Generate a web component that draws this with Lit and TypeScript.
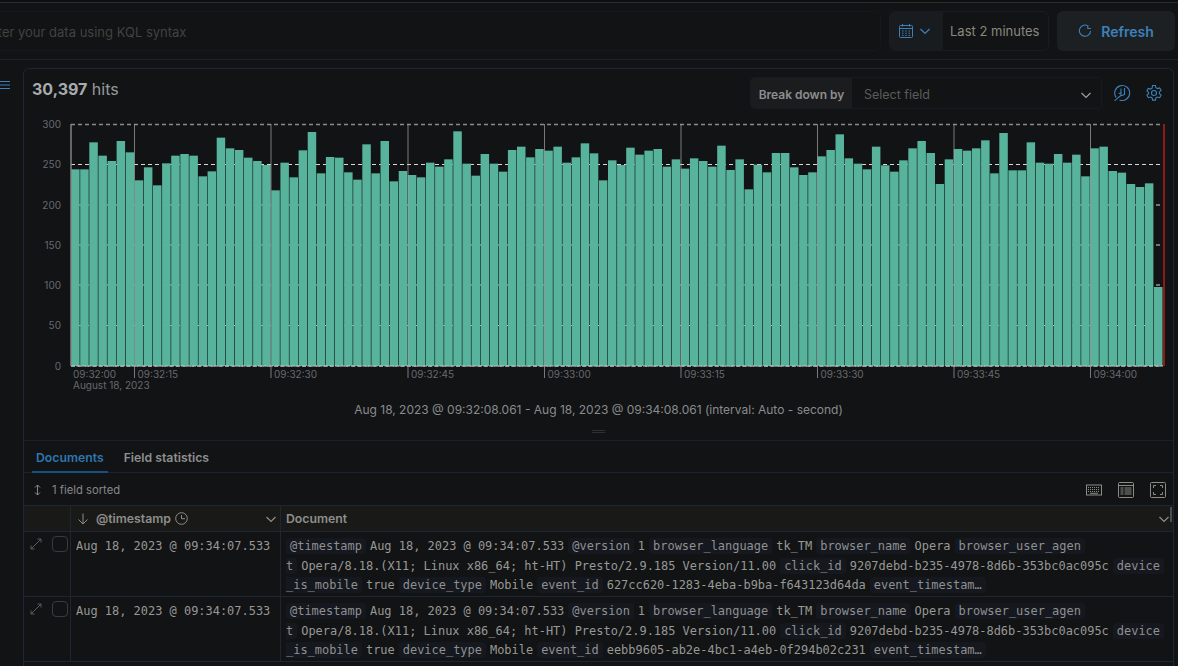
import { LitElement, html, css, svg } from "lit";
import { customElement } from "lit/decorators.js";

const TOPS = [133,133,52,92,108,48,82,166,127,181,115,92,87,92,154,139,38,70,75,98,108,120,196,113,157,76,21,145,96,98,
142,164,58,145,48,169,138,150,157,113,125,103,19,116,152,87,116,140,75,65,97,72,77,65,113,97,55,85,166,106,
120,68,89,77,72,125,103,131,100,108,125,62,135,103,193,119,142,84,84,127,150,142,94,75,28,100,116,133,65,121,
140,106,70,48,84,177,103,72,77,70,46,145,24,136,136,52,113,116,87,113,89,154,70,65,138,143,177,186,175,486];

const TICKS: [number, string][] = [[134.5,"09:32:15"],[271,"09:32:30"],[408,"09:32:45"],[544.5,"09:33:00"],[681,"09:33:15"],[817.5,"09:33:30"],[954,"09:33:45"],[1090.5,"09:34:00"]];
const GRID: [number, string][] = [[124.5,"300"],[164.5,"250"],[205,"200"],[245,"150"],[285,"100"],[325.5,"50"],[366,"0"]];

function chart() {
  return html`<svg class="chart" width="1150" height="285" viewBox="24 115 1150 285">
    ${GRID.map(([y, l], i) => svg`
      <line x1="71" x2="1163" y1=${y} y2=${y} stroke=${i === 0 ? "#8a8a8a" : "#d8d8d8"} stroke-width=${i === 0 ? 1.5 : 1} stroke-dasharray="4 3"></line>
      <text x="61" y=${y + 3.5} text-anchor="end" class="ax">${l}</text>`)}
    ${TOPS.map((z, i) => {
      const top = 125 + z / 3;
      return svg`<rect x=${70.8 + i * 9.1 + 0.3} y=${top} width="8.5" height=${366 - top} fill="#57b39b"></rect>`;
    })}
    <line x1="71" x2="1163" y1="366" y2="366" stroke="#c9c9c9" stroke-width="1.2" stroke-dasharray="4 1.5"></line>
    <line x1="71" x2="71" y1="124" y2="366" stroke="#8a8a8a" stroke-width="1.4"></line>
    ${TICKS.map(([x, l]) => svg`
      <line x1=${x} x2=${x} y1="124" y2="378" stroke="#a4a6a6" stroke-width="1" opacity="0.7"></line>
      <text x=${x + 3} y="378" class="ax">${l}</text>`)}
    <text x="73" y="378" class="ax">09:32:00</text>
    <text x="73" y="389" class="ax">August 18, 2023</text>
    <line x1="1164" x2="1164" y1="124" y2="366" stroke="#8f1a1a" stroke-width="2"></line>
  </svg>`;
}

type Item = [string, string];
function line(items: (Item | string)[]) {
  return html`<div class="ln">${items.map((it) =>
    typeof it === "string"
      ? html`<span class="dd">${it}</span>`
      : html`<span class=${it[0] === "c" ? "dt cont" : "dt"}>${it[1]}</span>`
  )}</div>`;
}

function row(id: string) {
  return html`<div class="row">
    <div class="c-ctl">
      <svg class="ic" width="12" height="12" viewBox="0 0 12 12" fill="none" stroke="#5b5d5e" stroke-width="1"><path d="M1 11L11 1M7.5 1H11v3.5M1 7.5V11h3.5"></path></svg>
      <span class="cb"></span>
    </div>
    <div class="c-ts">Aug 18, 2023 @ 09:34:07.533</div>
    <div class="c-doc">
      ${line([["d","@timestamp"],"Aug 18, 2023 @ 09:34:07.533",["d","@version"],"1",["d","browser_language"],"tk_TM",["d","browser_name"],"Opera",["d","browser_user_agen"]])}
      ${line([["c","t"],"Opera/8.18.(X11; Linux x86_64; ht-HT) Presto/2.9.185 Version/11.00",["d","click_id"],"9207debd-b235-4978-8d6b-353bc0ac095c",["d","device"]])}
      ${line([["c","_is_mobile"],"true",["d","device_type"],"Mobile",["d","event_id"],id,["d","event_timestam…"]])}
    </div>
  </div>`;
}

const chevron = (c: string, w = 12) => html`<svg width=${w} height=${w} viewBox="0 0 12 12" fill="none" stroke=${c} stroke-width="1.2"><path d="M1.5 4l4.5 4.5L10.5 4"></path></svg>`;

@customElement("app-root")
export class AppRoot extends LitElement {
  static styles = css`
    :host { display: block; width: 1178px; height: 666px; overflow: hidden; background: #111314; font-family: Inter, "Liberation Sans", sans-serif; color: #a0a0a0; }
    .strip { height: 2px; background: #0d0f10; border-bottom: 1px solid #2a2c2e; }
    .query { height: 57px; box-sizing: border-box; display: flex; align-items: center; gap: 8px; padding: 0 3px 0 0; border-bottom: 1px solid #1e222b; }
    .input { width: 881px; height: 40px; box-sizing: border-box; border: 1px solid #15181c; border-left: none; border-radius: 0 6px 6px 0; display: flex; align-items: center; overflow: hidden; font-size: 13px; color: #434240; white-space: nowrap; }
    .input span { margin-left: -16.4px; padding-top: 1px; }
    .date { width: 160px; height: 40px; box-sizing: border-box; border: 1px solid #191c24; border-radius: 6px; display: flex; overflow: hidden; }
    .date .btn { width: 53px; background: #191c1e; display: flex; align-items: center; gap: 5px; padding-left: 8px; box-sizing: border-box; }
    .date .val { flex: 1; display: flex; align-items: center; padding-left: 7px; font-size: 13px; color: #8a8780; white-space: nowrap; }
    .refresh { width: 118px; height: 40px; background: #1c2023; border-radius: 6px; display: flex; align-items: center; justify-content: center; gap: 9px; color: #3d80ba; font-weight: 600; font-size: 14px; }
    .main { display: flex; padding-top: 8px; }
    .side { width: 23px; flex: none; padding-top: 6px; height: 20px; box-sizing: content-box; }
    .panel { width: 1151px; height: 640px; box-sizing: border-box; border: 1px solid #1d2636; border-bottom: none; border-radius: 6px 6px 0 0; }
    .head { height: 46px; display: flex; align-items: flex-start; padding: 8px 8px 0 8px; box-sizing: border-box; }
    .hits { font-size: 16px; line-height: 24px; color: #999a9c; flex: 1; }
    .hits b { font-weight: 700; color: #a9abad; }
    .break { width: 352px; height: 32px; box-sizing: border-box; border: 1px solid #171a20; border-radius: 4px; display: flex; overflow: hidden; }
    .break .pre { width: 101px; background: #1a1c1e; font-size: 12px; font-weight: 600; color: #8e8e8e; display: flex; align-items: center; justify-content: center; white-space: nowrap; padding-top: 2px; box-sizing: border-box; }
    .break .sel { flex: 1; display: flex; align-items: center; justify-content: space-between; padding: 3px 9px 0 12px; font-size: 12.5px; color: #5b5b58; }
    .hicons { display: flex; gap: 14px; align-items: center; height: 32px; margin-left: 11px; margin-right: 2px; }
    .chart { display: block; }
    .ax { font: 10px Inter, sans-serif; fill: #68696f; }
    .cap { height: 18px; margin-top: 1px; text-align: center; font-size: 12px; line-height: 18px; color: #8a8b8e; }
    .handle { height: 21px; display: flex; flex-direction: column; align-items: center; justify-content: flex-start; padding-top: 11px; box-sizing: border-box; gap: 1px; }
    .handle i { display: block; width: 13px; height: 1px; background: #2d2f33; }
    .tabs { height: 33px; box-sizing: border-box; display: flex; border-top: 1px solid #1c1f26; border-bottom: 1px solid #1c2330; padding-left: 8px; gap: 12px; }
    .tab { height: 32px; box-sizing: border-box; display: flex; align-items: center; padding: 2px 4px 0; font-size: 12.25px; font-weight: 600; color: #8e8f90; border-bottom: 2px solid transparent; margin-bottom: -1px; }
    .tab.on { color: #2f76b0; border-bottom-color: #174f80; }
    .tool { height: 33px; box-sizing: border-box; display: flex; align-items: center; padding: 2px 7px 0 8px; border-bottom: 1px solid #1c2634; }
    .sorted { flex: 1; display: flex; align-items: center; gap: 9px; font-size: 11.25px; color: #88888a; }
    .ticons { display: flex; gap: 16px; }
    .thead { height: 26px; box-sizing: border-box; display: flex; background: #191a17; border-bottom: 1px solid #1c2634; position: relative; font-size: 12.25px; font-weight: 600; color: #8e8e8c; }
    .h-ctl { width: 47px; box-sizing: border-box; border-right: 1px solid #1c2634; }
    .h-ts { width: 210px; box-sizing: border-box; border-right: 1px solid #1c2634; display: flex; align-items: center; padding-left: 5px; gap: 6px; }
    .h-ts .sp { flex: 1; }
    .h-ts .chv { margin-right: 3px; display: flex; }
    .h-doc { flex: 1; display: flex; align-items: center; justify-content: space-between; padding-left: 5px; padding-right: 3px; }
    .thumb { position: absolute; right: 1px; top: 1px; width: 2px; height: 15px; background: #4a4f55; }
    .row { height: 65px; box-sizing: border-box; display: flex; border-bottom: 1px solid #1c2634; font-family: "DejaVu Sans Mono", monospace; font-size: 11.96px; color: #989894; }
    .c-ctl { width: 47px; flex: none; box-sizing: border-box; border-right: 1px solid #1c2634; display: flex; gap: 10px; padding: 4px 0 0 6px; }
    .c-ctl .ic { margin-top: 2px; }
    .cb { width: 16px; height: 16px; box-sizing: border-box; border: 1px solid #383c41; border-radius: 4px; display: block; }
    .c-ts { width: 210px; flex: none; box-sizing: border-box; border-right: 1px solid #1c2634; padding: 5px 0 0 5px; line-height: 19px; white-space: nowrap; }
    .c-doc { flex: 1; padding: 5px 0 0 5px; white-space: nowrap; overflow: hidden; }
    .ln { height: 19.6px; line-height: 19.6px; }
    .dt { background: #15181e; padding: 1px 4px; border-radius: 3px; color: #8f9091; }
    .dt.cont { padding-left: 0; border-radius: 0 3px 3px 0; }
    .dd { margin: 0 4px; white-space: pre; }
  `;

  render() {
    return html`
      <div class="strip"></div>
      <div class="query">
        <div class="input"><span>Filter your data using KQL syntax</span></div>
        <div class="date">
          <div class="btn">
            <svg width="16" height="16" viewBox="0 0 16 16" fill="none" stroke="#3d80ba" stroke-width="1"><rect x="1.5" y="2.5" width="13" height="12" rx="1"></rect><path d="M1.5 5.5h13M4.5 1v2.5M11.5 1v2.5"></path><path d="M4 8h1.5M7.2 8h1.5M10.5 8H12M4 10.2h1.5M7.2 10.2h1.5M10.5 10.2H12M4 12.4h1.5M7.2 12.4h1.5M10.5 12.4H12"></path></svg>
            ${chevron("#3d80ba")}
          </div>
          <div class="val">Last 2 minutes</div>
        </div>
        <div class="refresh">
          <svg width="14" height="14" viewBox="0 0 14 14" fill="none" stroke="#3d80ba" stroke-width="1.1"><path d="M9.5 1.6A5.6 5.6 0 1 0 12.6 7"></path><path d="M9.8 1v3.5h3"></path></svg>
          <span>Refresh</span>
        </div>
      </div>
      <div class="main">
        <div class="side">
          <svg width="11" height="10" viewBox="0 0 11 10" stroke="#3d80ba" stroke-width="1"><path d="M0 1.5h10M0 5h10M0 8.5h10"></path></svg>
        </div>
        <div class="panel">
          <div class="head">
            <div class="hits"><b>30,397</b> hits</div>
            <div class="break">
              <div class="pre">Break down by</div>
              <div class="sel"><span>Select field</span>${chevron("#a0a0a0")}</div>
            </div>
            <div class="hicons">
              <svg width="18" height="18" viewBox="0 0 18 18" fill="none" stroke="#3d80ba" stroke-width="1.1"><path d="M3.2 13.5A7.5 7.5 0 1 1 6.5 16"></path><path d="M1.5 16.8l4.2-3.6M8 4.5v7l-2.3 1.7M11.5 4v6.5l-3 1.2M5.8 9.8l2.2-1"></path></svg>
              <svg width="18" height="18" viewBox="0 0 18 18" fill="none" stroke="#3d80ba" stroke-width="1.1"><circle cx="9" cy="9" r="2.5"></circle><path d="M7.6 1.5h2.8l.5 2.2 1.6.9 2.2-.7 1.4 2.5-1.7 1.5v1.8l1.7 1.5-1.4 2.5-2.2-.7-1.6.9-.5 2.2H7.6l-.5-2.2-1.6-.9-2.2.7-1.4-2.5 1.7-1.5V8.4L1.9 6.9l1.4-2.5 2.2.7 1.6-.9z"></path></svg>
            </div>
          </div>
          ${chart()}
          <div class="cap">Aug 18, 2023 @ 09:32:08.061 - Aug 18, 2023 @ 09:34:08.061 (interval: Auto - second)</div>
          <div class="handle"><i></i><i></i></div>
          <div class="tabs">
            <div class="tab on">Documents</div>
            <div class="tab">Field statistics</div>
          </div>
          <div class="tool">
            <div class="sorted">
              <svg width="11" height="12" viewBox="0 0 11 12" fill="none" stroke="#88888a" stroke-width="1"><path d="M5.5 1v10M3 3.5L5.5 1 8 3.5M3 8.5L5.5 11 8 8.5"></path></svg>
              <span>1 field sorted</span>
            </div>
            <div class="ticons">
              <svg width="16" height="16" viewBox="0 0 16 16" fill="none" stroke="#8c8c84" stroke-width="1"><rect x="0.5" y="3" width="15" height="10"></rect><path d="M2 5.5h12M2 7.5h12M2 9.5h12" stroke-dasharray="1 1"></path><path d="M4 11.3h8"></path></svg>
              <svg width="16" height="16" viewBox="0 0 16 16" fill="none" stroke="#8c8c84" stroke-width="1"><rect x="0.5" y="0.5" width="15" height="15" rx="1"></rect><path d="M0.5 3.5h15"></path><path d="M2.5 6h3M6.5 6h7M2.5 8h3M6.5 8h7M2.5 10h3M6.5 10h7M2.5 12h3M6.5 12h7"></path></svg>
              <svg width="16" height="16" viewBox="0 0 16 16" fill="none" stroke="#8c8c84" stroke-width="1"><rect x="0.5" y="0.5" width="15" height="15" rx="1"></rect><path d="M3.5 6V3.5H6M10 3.5h2.5V6M12.5 10v2.5H10M6 12.5H3.5V10"></path></svg>
            </div>
          </div>
          <div class="thead">
            <div class="h-ctl"></div>
            <div class="h-ts">
              <svg width="14" height="14" viewBox="0 0 14 14" fill="none" stroke="#8e8e8c" stroke-width="1"><path d="M7 1.5v10.5M2.5 7.5L7 12l4.5-4.5"></path></svg>
              <span>@timestamp</span>
              <svg width="13" height="13" viewBox="0 0 13 13" fill="none" stroke="#8e8e8c" stroke-width="1" style="margin-left:-2px"><circle cx="6.5" cy="6.5" r="5.8"></circle><path d="M6.5 3v3.7H10"></path></svg>
              <span class="sp"></span>
              <span class="chv">${chevron("#8e8e8c")}</span>
            </div>
            <div class="h-doc"><span>Document</span>${chevron("#8e8e8c")}</div>
            <div class="thumb"></div>
          </div>
          ${row("627cc620-1283-4eba-b9ba-f643123d64da")}
          ${row("eebb9605-ab2e-4bc1-a4eb-0f294b02c231")}
        </div>
      </div>
    `;
  }
}
